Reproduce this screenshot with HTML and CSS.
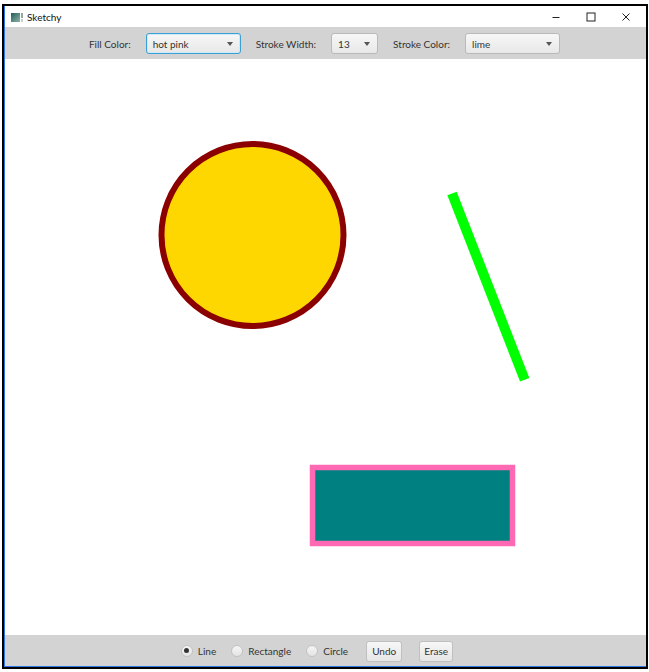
FILE: index.html
```html
<!DOCTYPE html>
<html>
<head>
<meta charset="utf-8">
<title>Sketchy</title>
<link rel="stylesheet" href="styles.css">
</head>
<body>
<div class="frame">
  <div class="inner">
    <div class="titlebar">
      <svg class="app-icon" width="13" height="9" viewBox="0 0 13 9">
        <defs>
          <linearGradient id="ig" x1="0" y1="0" x2="1" y2="1">
            <stop offset="0" stop-color="#1f5e5a"/>
            <stop offset="1" stop-color="#8fb3a8"/>
          </linearGradient>
        </defs>
        <rect x="0" y="0" width="9" height="9" fill="url(#ig)"/>
        <rect x="10" y="0" width="2" height="5" fill="#9aa6a4"/>
        <rect x="10" y="6" width="2" height="3" fill="#c9d0cf"/>
      </svg>
      <span class="title">Sketchy</span>
      <div class="controls">
        <div class="ctl"><svg width="10" height="10" viewBox="0 0 10 10"><line x1="1.5" y1="5.5" x2="8.5" y2="5.5" stroke="#222" stroke-width="1"/></svg></div>
        <div class="ctl"><svg width="10" height="10" viewBox="0 0 10 10"><rect x="1" y="1" width="8" height="8" fill="none" stroke="#222" stroke-width="1"/></svg></div>
        <div class="ctl"><svg width="10" height="10" viewBox="0 0 10 10"><path d="M1.5 1.5 L8.5 8.5 M8.5 1.5 L1.5 8.5" stroke="#222" stroke-width="1"/></svg></div>
      </div>
    </div>
    <div class="toolbar">
      <span class="lbl">Fill Color:</span>
      <div class="combo focused wide"><span>hot pink</span><i class="arrow"></i></div>
      <span class="lbl">Stroke Width:</span>
      <div class="combo narrow"><span>13</span><i class="arrow"></i></div>
      <span class="lbl">Stroke Color:</span>
      <div class="combo wide"><span>lime</span><i class="arrow"></i></div>
    </div>
    <div class="canvas">
      <svg class="drawing" width="641" height="576" viewBox="0 0 641 576">
        <circle cx="247.5" cy="176" r="91" fill="#FFD700" stroke="#8B0000" stroke-width="6"/>
        <line x1="447" y1="134.5" x2="519.7" y2="320.7" stroke="#00FF00" stroke-width="10"/>
        <rect x="307.5" y="408.5" width="200" height="76" fill="#008080" stroke="#FF69B4" stroke-width="5.5"/>
      </svg>
    </div>
    <div class="bottombar">
      <label class="radio"><i class="dot selected"></i><span>Line</span></label>
      <label class="radio"><i class="dot"></i><span>Rectangle</span></label>
      <label class="radio"><i class="dot"></i><span>Circle</span></label>
      <div class="btn undo">Undo</div>
      <div class="btn erase">Erase</div>
    </div>
  </div>
</div>
</body>
</html>
```

FILE: styles.css
```css
html, body {
  margin: 0;
  padding: 0;
  background: #ffffff;
}
body {
  font-family: Lato, "Open Sans", sans-serif;
  font-size: 10px;
  color: #333333;
}
.frame {
  margin: 4px 0 0 2px;
  width: 646px;
  height: 665px;
  box-sizing: border-box;
  border: 2px solid #000000;
}
.inner {
  height: 100%;
  box-sizing: border-box;
  border-left: 1px solid #2f74e8;
  border-bottom: 1px solid #2f74e8;
  display: flex;
  flex-direction: column;
}
.titlebar {
  height: 21px;
  flex: none;
  display: flex;
  align-items: center;
  background: #ffffff;
}
.app-icon {
  margin-left: 6px;
  margin-top: 1px;
}
.title {
  margin-left: 3px;
  font-size: 10px;
  color: #111111;
}
.controls {
  margin-left: auto;
  margin-right: 3px;
  display: flex;
}
.ctl {
  width: 35px;
  height: 21px;
  display: flex;
  align-items: center;
  justify-content: center;
}
.toolbar {
  height: 32px;
  flex: none;
  background: #d3d3d3;
  display: flex;
  align-items: center;
  justify-content: center;
  gap: 15px;
  padding-top: 1px;
  padding-right: 2px;
  box-sizing: border-box;
}
.combo {
  height: 21px;
  box-sizing: border-box;
  border: 1px solid #b9b9b9;
  border-radius: 3px;
  background: linear-gradient(#f7f7f7, #e8e8e8);
  display: flex;
  align-items: center;
  padding: 0 7px 0 6px;
  color: #333333;
}
.combo span {
  flex: 1;
}
.combo.wide { width: 95px; }
.combo.narrow { width: 47px; }
.combo.focused {
  border-color: #3aa0d6;
  box-shadow: inset 0 0 0 1px #cfe9f7;
}
.arrow {
  width: 0;
  height: 0;
  border-left: 3.5px solid transparent;
  border-right: 3.5px solid transparent;
  border-top: 4px solid #555555;
  margin-top: 1px;
}
.canvas {
  flex: 1;
  background: #ffffff;
  overflow: hidden;
}
.drawing {
  display: block;
}
.bottombar {
  height: 31px;
  flex: none;
  background: #d3d3d3;
  display: flex;
  align-items: center;
  justify-content: center;
  padding-right: 17px;
  box-sizing: border-box;
}
.radio {
  display: flex;
  align-items: center;
  gap: 5px;
  margin-right: 15px;
}
.dot {
  width: 12px;
  height: 12px;
  box-sizing: border-box;
  border-radius: 50%;
  border: 1px solid #c2c2c2;
  background: linear-gradient(#f5f5f5, #e4e4e4);
  display: flex;
  align-items: center;
  justify-content: center;
}
.dot.selected::after {
  content: "";
  width: 5px;
  height: 5px;
  border-radius: 50%;
  background: #333333;
}
.btn {
  height: 21px;
  box-sizing: border-box;
  border: 1px solid #c0c0c0;
  border-radius: 3px;
  background: linear-gradient(#f7f7f7, #e6e6e6);
  display: flex;
  align-items: center;
  justify-content: center;
  color: #333333;
  margin-top: 1px;
}
.undo { width: 36px; margin-left: 3px; }
.erase { width: 34px; margin-left: 17px; }
```
